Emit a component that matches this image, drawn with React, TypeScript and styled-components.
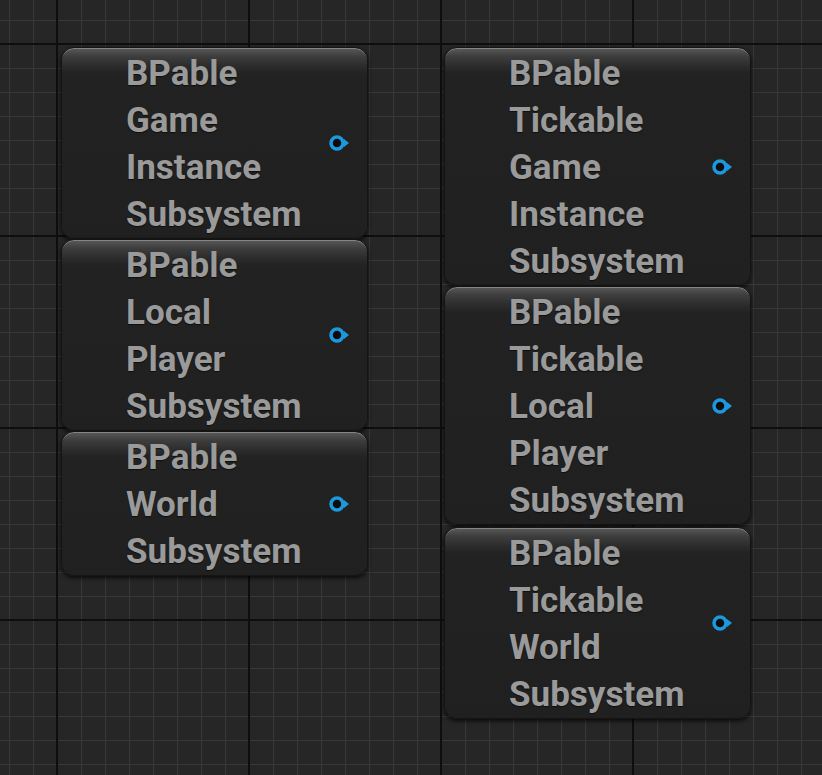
import styled, { createGlobalStyle } from "styled-components";

type NodeData = {
  id: number,
  words: string[],
}

const GlobalStyle = createGlobalStyle`
  html, body {
    margin: 0;
    padding: 0;
    background-color: #262626;
  }
  body {
    font-family: Roboto, "Liberation Sans", sans-serif;
  }
`;

// blueprint graph grid: minor lines every 24px, dark major lines every 192px
const Graph = styled.div`
  width: 822px;
  height: 775px;
  overflow: hidden;
  box-sizing: border-box;
  display: flex;
  align-items: flex-start;
  gap: 76px;
  padding: 47px 0 0 61px;
  background-color: #262626;
  background-image:
    linear-gradient(to right, #0e0e0e 2px, transparent 2px),
    linear-gradient(to bottom, #0e0e0e 2px, transparent 2px),
    linear-gradient(to right, #383838 1px, transparent 1px),
    linear-gradient(to bottom, #383838 1px, transparent 1px);
  background-size: 192px 192px, 192px 192px, 24px 24px, 24px 24px;
  background-position: 56px 0, 0 43px, 9px 0, 0 20px;
`;

const Column = styled.div`
  display: flex;
  flex-direction: column;
  width: 307px;
`;

const Node = styled.div<{ $gapAfter?: number }>`
  position: relative;
  box-sizing: border-box;
  width: 307px;
  margin-bottom: ${p => p.$gapAfter ?? 0}px;
  padding: 2px 60px 0 64px;
  border-radius: 13px;
  border: 1px solid #141414;
  background:
    linear-gradient(to bottom, #5a5a5a 0px, #3e3e3e 8px, #2c2c2c 18px, #222222 26px, #202020 100%);
  box-shadow:
    inset 0 1px 0 rgba(170, 170, 170, 0.55),
    0 2px 4px rgba(0, 0, 0, 0.75);
`;

const Title = styled.div`
  display: flex;
  flex-direction: column;
`;

const Word = styled.span`
  font-size: 35px;
  font-weight: 700;
  line-height: 47px;
  color: #9a9a9a;
  text-shadow: 0 1px 1px rgba(0, 0, 0, 0.6);
  white-space: nowrap;
`;

const Pin = styled.svg`
  position: absolute;
  right: 14px;
  top: 50%;
  margin-top: -9px;
`;

const leftNodes: NodeData[] = [
  { id: 1, words: ["BPable", "Game", "Instance", "Subsystem"] },
  { id: 2, words: ["BPable", "Local", "Player", "Subsystem"] },
  { id: 3, words: ["BPable", "World", "Subsystem"] },
];

const rightNodes: NodeData[] = [
  { id: 4, words: ["BPable", "Tickable", "Game", "Instance", "Subsystem"] },
  { id: 5, words: ["BPable", "Tickable", "Local", "Player", "Subsystem"] },
  { id: 6, words: ["BPable", "Tickable", "World", "Subsystem"] },
];

const OutPin = () => (
  <Pin width="24" height="18" viewBox="0 0 24 18">
    <circle cx="8" cy="9" r="6" fill="#0c0c0c" stroke="#1c98de" strokeWidth="3.5" />
    <path d="M15 5 L20 9 L15 13 Z" fill="#1c98de" />
  </Pin>
);

const SubsystemNode = ({ node, gapAfter }: { node: NodeData, gapAfter?: number }) => (
  <Node $gapAfter={gapAfter}>
    <Title>
      {node.words.map((w, i) => (
        <Word key={i}>{w}</Word>
      ))}
    </Title>
    <OutPin />
  </Node>
);

const App = () => {
  return (
    <>
      <GlobalStyle />
      <Graph>
        <Column>
          {leftNodes.map(n => <SubsystemNode key={n.id} node={n} />)}
        </Column>
        <Column>
          {rightNodes.map(n => (
            <SubsystemNode key={n.id} node={n} gapAfter={n.id === 5 ? 2 : 0} />
          ))}
        </Column>
      </Graph>
    </>
  );
};

export default App;
